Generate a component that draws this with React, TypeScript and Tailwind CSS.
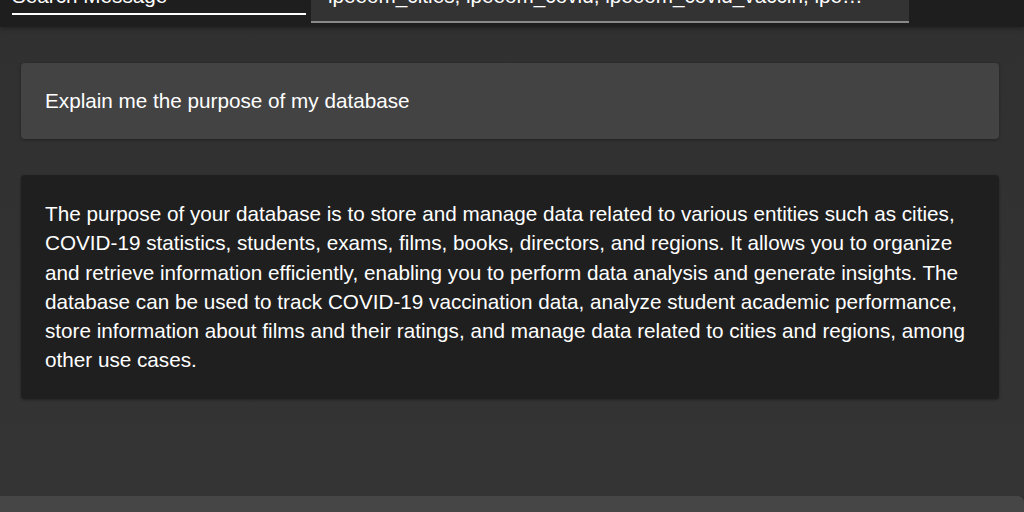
import { ChevronDown } from 'lucide-react'

const answer =
  'The purpose of your database is to store and manage data related to various entities such as cities, COVID-19 statistics, students, exams, films, books, directors, and regions. It allows you to organize and retrieve information efficiently, enabling you to perform data analysis and generate insights. The database can be used to track COVID-19 vaccination data, analyze student academic performance, store information about films and their ratings, and manage data related to cities and regions, among other use cases.'

export default function App() {
  return (
    <div
      className="w-[1024px] h-[512px] flex flex-col overflow-hidden bg-[#303030] text-white"
      style={{ fontFamily: '"Liberation Sans", Arial, sans-serif' }}
    >
      {/* top bar: search + tables select, scrolled partly out of view */}
      <div className="h-[27px] shrink-0 bg-[#1e1e1e] flex items-start overflow-hidden shadow-[0_2px_4px_rgba(0,0,0,0.25)] z-10">
        <div className="ml-[12px] w-[294px] -mt-[16px] flex flex-col">
          <div className="h-[29px] flex items-end text-[20.7px] leading-none pb-[6px] whitespace-nowrap">Search Message</div>
          <div className="h-[2px] bg-white" />
        </div>
        <div className="ml-[5px] w-[598px] h-[23px] bg-[#333333] border-b-2 border-[#8a8a8a] overflow-hidden">
          <div className="-mt-[15px] pl-[17px] text-[20.7px] leading-[22px] whitespace-nowrap">
            ipeeom_cities, ipeeom_covid, ipeeom_covid_vaccin, ipe…
          </div>
        </div>
        <div className="ml-[48px] -mt-[19px] text-[#bbbbbb]">
          <ChevronDown size={24} strokeWidth={3} />
        </div>
      </div>

      {/* conversation */}
      <div className="flex-1 flex flex-col gap-[36px] pl-[21px] pr-[25px] pt-[36px] bg-gradient-to-b from-[#303030] to-[#343434]">
        <div className="rounded-[4px] bg-[#434343] px-[24px] h-[76px] flex items-center text-[20.7px] shadow-[0_1px_3px_rgba(0,0,0,0.35)]">
          Explain me the purpose of my database
        </div>
        <div className="rounded-[4px] bg-[#1f1f1f] px-[24px] py-[24px] text-[20.7px] leading-[29.3px] shadow-[0_1px_3px_rgba(0,0,0,0.35)]">
          {answer}
        </div>
      </div>

      {/* bottom input area */}
      <div className="h-[16px] shrink-0 bg-[#464646] rounded-tr-[6px]" />
    </div>
  )
}
